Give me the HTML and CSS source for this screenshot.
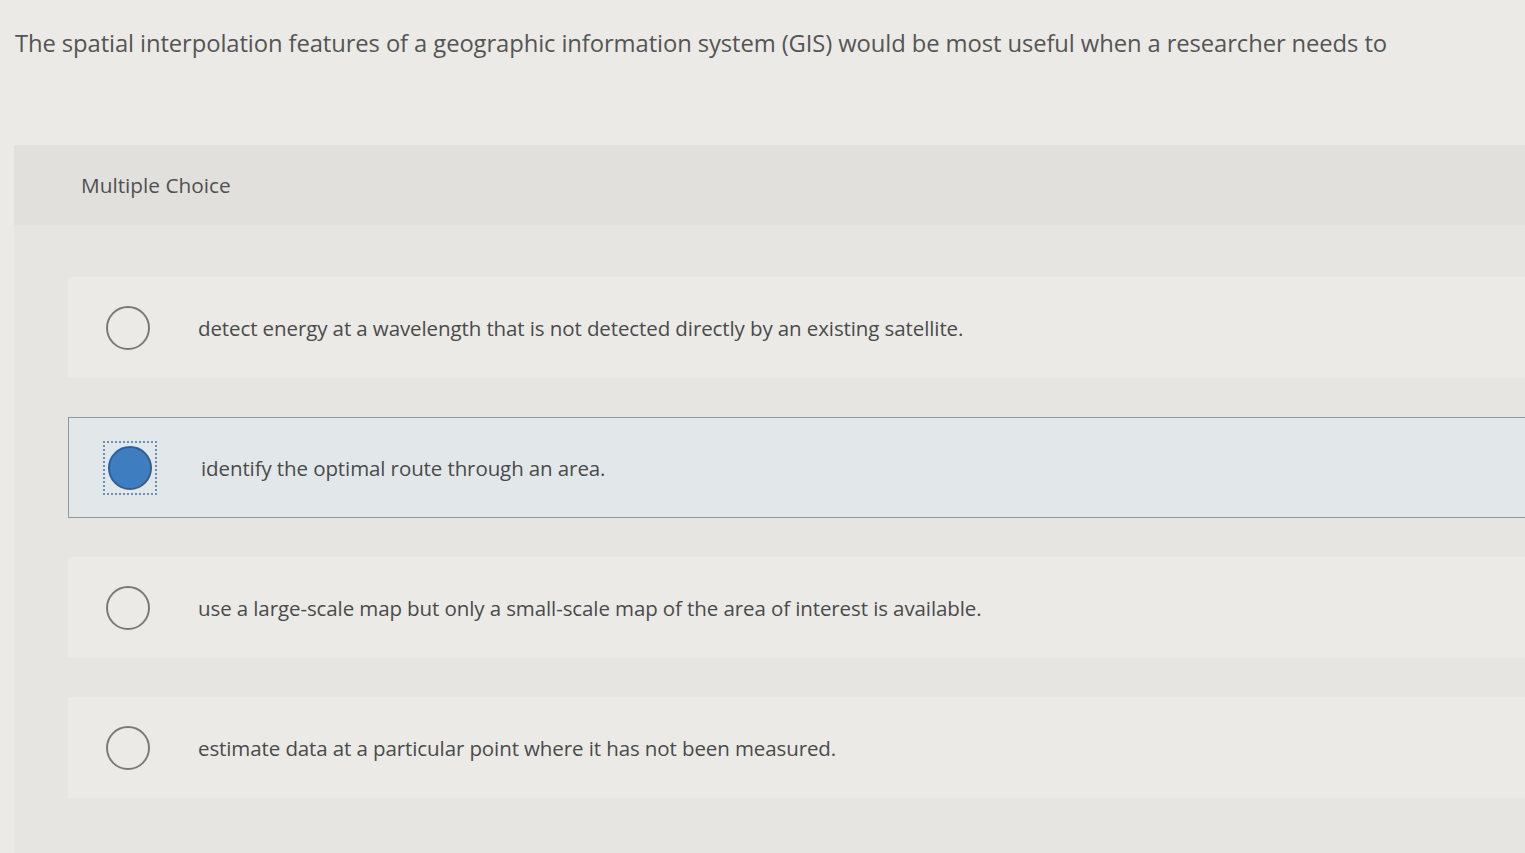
FILE: index.html
```html
<!DOCTYPE html>
<html lang="en">
<head>
<meta charset="utf-8">
<title>Multiple Choice</title>
<link rel="stylesheet" href="styles.css">
</head>
<body>
<main class="page">
  <p class="question">The spatial interpolation features of a geographic information system (GIS) would be most useful when a researcher needs to</p>
  <section class="panel">
    <div class="panel-header">Multiple Choice</div>
    <div class="options">
      <label class="option">
        <span class="radio"></span>
        <span class="option-text">detect energy at a wavelength that is not detected directly by an existing satellite.</span>
      </label>
      <label class="option selected">
        <span class="focus"><span class="radio filled"></span></span>
        <span class="option-text">identify the optimal route through an area.</span>
      </label>
      <label class="option">
        <span class="radio"></span>
        <span class="option-text">use a large-scale map but only a small-scale map of the area of interest is available.</span>
      </label>
      <label class="option">
        <span class="radio"></span>
        <span class="option-text">estimate data at a particular point where it has not been measured.</span>
      </label>
    </div>
  </section>
</main>
</body>
</html>
```

FILE: styles.css
```css
html, body {
  margin: 0;
  padding: 0;
  background: #ebeae7;
  overflow: hidden;
}

.page {
  width: 1525px;
  height: 853px;
  font-family: "Open Sans", Lato, "Liberation Sans", sans-serif;
  color: #4d4d4d;
}

.question {
  margin: 0;
  padding: 26px 0 0 15px;
  height: 145px;
  box-sizing: border-box;
  font-size: 23.8px;
  line-height: 34px;
  color: #555554;
  letter-spacing: -0.1px;
  white-space: nowrap;
}

.panel {
  margin-left: 14px;
  background: #e6e5e2;
  height: 708px;
}

.panel-header {
  height: 80px;
  display: flex;
  align-items: center;
  padding-left: 67px;
  font-size: 20.8px;
  color: #505050;
  background: #e1e0dd;
}

.options {
  display: flex;
  flex-direction: column;
  gap: 39px;
  padding-top: 52px;
}

.option {
  display: flex;
  align-items: center;
  height: 101px;
  margin-left: 54px;
  padding-left: 38px;
  background: #ebeae7;
  box-sizing: border-box;
}

.option.selected {
  background: #e2e8ea;
  border: 1.5px solid #8c9aa0;
  border-right: none;
  padding-left: 34px;
}

.radio {
  width: 40px;
  height: 40px;
  border: 2px solid #7a7a7a;
  border-radius: 50%;
  flex: none;
  box-sizing: content-box;
}

.focus {
  flex: none;
  padding: 3px;
  border: 2px dotted #6c8fb8;
  display: flex;
}

.radio.filled {
  background: #3e7dc0;
  border: 2px solid #2f5f94;
}

.option-text {
  margin-left: 48px;
  font-size: 20.5px;
  color: #4a4a4a;
  letter-spacing: -0.1px;
}

.option.selected .option-text {
  margin-left: 44px;
}
```
